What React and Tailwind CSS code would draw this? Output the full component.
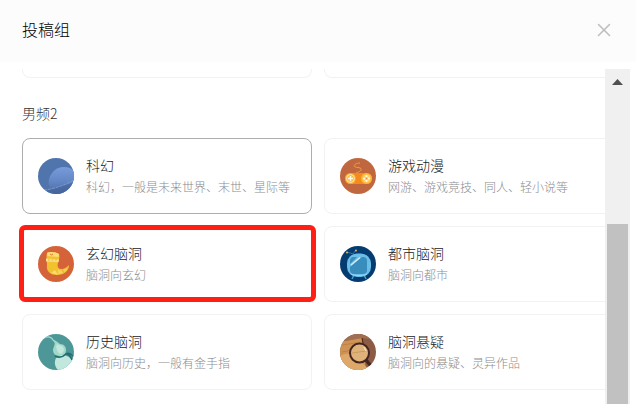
import React, { useState } from "react";
import { X } from "lucide-react";

const PlanetIcon = () => (
  <svg viewBox="0 0 36 36" className="w-9 h-9 shrink-0 rounded-full" aria-hidden="true">
    <defs>
      <linearGradient id="planet" x1="0" y1="0" x2="0" y2="1">
        <stop offset="0" stopColor="#789cdb" />
        <stop offset="0.5" stopColor="#6488c6" />
        <stop offset="1" stopColor="#4a6aa4" />
      </linearGradient>
    </defs>
    <rect width="36" height="36" fill="#5074ac" />
    <path d="M11 27C9 19 16 9 26 9C32 9 37 12 38 17V27L28 36H16Z" fill="url(#planet)" />
    <path d="M9 33L37 24V36H9Z" fill="#42609a" opacity="0.6" />
    <path d="M6 32C16 31 27 27 36 22" fill="none" stroke="#8ba4cf" strokeWidth="0.7" strokeDasharray="3 1" />
  </svg>
);

const GamepadIcon = () => (
  <svg viewBox="0 0 36 36" className="w-9 h-9 shrink-0 rounded-full" aria-hidden="true">
    <rect width="36" height="36" fill="#c1673f" />
    <path d="M20 5C16 5 14 7 14 8C15 10 21 9 21 11C22 13 18 14 16 15" fill="none" stroke="#eda044" strokeWidth="1" />
    <rect x="5" y="15" width="27" height="11" rx="5.5" fill="#f48b1c" />
    <circle cx="10.5" cy="20.5" r="5.5" fill="#fba930" />
    <circle cx="26.5" cy="20.5" r="5.5" fill="#fdb43b" />
    <circle cx="10.5" cy="20.5" r="4" fill="#ffb93f" stroke="#fff0c0" strokeWidth="0.9" />
    <path d="M10.5 18V23M8 20.5H13" stroke="#fffbe5" strokeWidth="1.4" />
    <circle cx="26.5" cy="20.5" r="4" fill="#ffd25e" />
    <g fill="#fffbe5">
      <circle cx="26.5" cy="18.2" r="1.1" />
      <circle cx="26.5" cy="22.8" r="1.1" />
      <circle cx="24.2" cy="20.5" r="1.1" />
      <circle cx="28.8" cy="20.5" r="1.1" />
    </g>
    <circle cx="26.5" cy="20.5" r="0.8" fill="#e98422" />
  </svg>
);

const HornIcon = () => (
  <svg viewBox="0 0 36 36" className="w-9 h-9 shrink-0 rounded-full" aria-hidden="true">
    <rect width="36" height="36" fill="#d5633a" />
    <path d="M9 7C12 5 18 6 21 8C22 10 21 14 20 17C19 20 20 23 23 23C27 23 29 21 31 19C31 25 26 29 19 29C12 29 8 25 9 19C9 14 8 11 9 7Z" fill="#f2c12f" />
    <path d="M9 7C12 5 18 6 21 8L20.5 11L9.500 10Z" fill="#fbdc77" />
    <path d="M8 12.500L21 13.500L20.500 16L8 15.500Z" fill="#fbe08a" />
    <path d="M13 27L17 24L20 29Z" fill="#f9da6b" />
    <path d="M20 23C21 25 25 25 29 22C27 27 23 28 20 28Z" fill="#f7d35b" />
    <path d="M24 23.500L26 27" fill="none" stroke="#eeb32a" strokeWidth="1.4" />
    <path d="M12 8L13.500 9L15 8" stroke="#dc7535" strokeWidth="1" fill="none" />
    <path d="M10 14H19" stroke="#e9a83c" strokeWidth="0.8" strokeDasharray="2 1.500" />
  </svg>
);

const TvIcon = () => (
  <svg viewBox="0 0 36 36" className="w-9 h-9 shrink-0 rounded-full" aria-hidden="true">
    <rect width="36" height="36" fill="#043b70" />
    <path d="M13 8L7 6M13 8L16 4" stroke="#3c769c" strokeWidth="0.9" />
    <circle cx="7" cy="6.500" r="0.9" fill="#e9c36e" />
    <circle cx="16" cy="4.500" r="0.9" fill="#e9c36e" />
    <path d="M14 29L12 33M24 29L26 33" stroke="#4a9ecb" strokeWidth="1.5" />
    <rect x="7" y="7.500" width="24" height="23.500" rx="10" fill="#69bee8" />
    <rect x="10" y="11" width="17" height="17" rx="4" fill="#398dbd" />
    <path d="M10 18L17 11H22L10 21Z" fill="#6db9e0" />
    <path d="M11 19L20 11.500" stroke="#d3effb" strokeWidth="1.2" />
    <path d="M11 28C15 30 23 30 27 28" fill="none" stroke="#a3e0f5" strokeWidth="0.8" />
  </svg>
);

const GourdIcon = () => (
  <svg viewBox="0 0 36 36" className="w-9 h-9 shrink-0 rounded-full" aria-hidden="true">
    <rect width="36" height="36" fill="#4e9799" />
    <path d="M6 4C10 2 14 3 15 6L18 9" fill="none" stroke="#a6dbce" strokeWidth="1.2" />
    <path d="M16 6C19 7 20 9 22 10C26 10 28 13 28 16C28 20 25 22 22 22C17 22 15 19 15 16C15 13 18 11 16 6Z" fill="#a2d8c8" />
    <path d="M19 10C20 11 22 11 24 12C27 14 26 19 23 20C19 19 19 15 18 13Z" fill="#c0e8dc" />
    <path d="M19 23C23 20 31 21 34 26V36H20C16 32 16 26 19 23Z" fill="#c2e8de" />
    <path d="M17 22C21 24 25 23 28 20C31 18 33 20 35 22M29 20C32 21 33 23 34 26" fill="none" stroke="#246d72" strokeWidth="1.6" />
  </svg>
);

const MagnifierIcon = () => (
  <svg viewBox="0 0 36 36" className="w-9 h-9 shrink-0 rounded-full" aria-hidden="true">
    <rect width="36" height="36" fill="#8c5b43" />
    <path d="M0 0H36V6L22 4L0 8Z" fill="#a06f52" />
    <path d="M0 8L22 4L26 36H0Z" fill="#cf9455" />
    <path d="M0 22C7 19 11 19 15 23L30 36H0Z" fill="#dea869" />
    <path d="M2 11L22 8M2 18L12 16" stroke="#b57c46" strokeWidth="0.8" />
    <path d="M22 4L23 9" stroke="#4f2a22" strokeWidth="1.2" />
    <circle cx="19.500" cy="19" r="9.500" fill="#dfb27a" stroke="#432622" strokeWidth="2" />
    <path d="M12 19L26 17" stroke="#c99a62" strokeWidth="1" />
    <path d="M24 13L26 17" stroke="#f4dfc4" strokeWidth="1.2" />
    <path d="M26 26L31 32" stroke="#432622" strokeWidth="3.500" />
  </svg>
);

const groups = [
  { name: "科幻", desc: "科幻，一般是未来世界、末世、星际等", Icon: PlanetIcon },
  { name: "游戏动漫", desc: "网游、游戏竞技、同人、轻小说等", Icon: GamepadIcon },
  { name: "玄幻脑洞", desc: "脑洞向玄幻", Icon: HornIcon, marked: true },
  { name: "都市脑洞", desc: "脑洞向都市", Icon: TvIcon },
  { name: "历史脑洞", desc: "脑洞向历史，一般有金手指", Icon: GourdIcon },
  { name: "脑洞悬疑", desc: "脑洞向的悬疑、灵异作品", Icon: MagnifierIcon },
];

const GroupCard = ({ group, selected, onSelect }) => {
  const { name, desc, Icon, marked } = group;

  return (
    <button
      type="button"
      aria-pressed={selected}
      onClick={onSelect}
      className={`relative flex h-19 items-center gap-3 rounded-lg border px-[15px] text-left ${
        selected ? "border-[#adadad]" : "border-[#f2f2f2]"
      }`}
    >
      <Icon />
      <span className="flex flex-col gap-0.5 whitespace-nowrap">
        <span className="text-sm leading-5 text-[#222]">{name}</span>
        <span className="text-xs leading-5 text-[#8c8c8c]">{desc}</span>
      </span>
      {/* Red highlight over the card */}
      {marked && (
        <span className="pointer-events-none absolute -top-[2px] -bottom-px -left-1 -right-[5px] rounded-md border-5 border-[#ff1f14]" />
      )}
    </button>
  );
};

const App = () => {
  const [selected, setSelected] = useState("科幻");

  return (
    <div className="flex h-screen flex-col overflow-hidden bg-white font-['Noto_Sans_CJK_SC',sans-serif] font-light">
      {/* Header */}
      <header className="flex h-[62px] shrink-0 items-center justify-between bg-[#fcfcfc] pb-1 pl-[22px] pr-[21px]">
        <h1 className="text-base leading-6 text-black">投稿组</h1>
        <button type="button" aria-label="关闭" className="pt-0.5 text-[#bfbfbf]">
          <X size={22} strokeWidth={1.75} />
        </button>
      </header>

      <div className="mt-[7px] flex min-h-0 flex-1 pr-1.5">
        {/* List */}
        <main className="min-w-0 flex-1 overflow-hidden pl-[22px]">
          <div className="grid grid-cols-[repeat(2,minmax(290px,1fr))] gap-3">
            <div className="h-[9px] rounded-b-lg border border-t-0 border-[#f2f2f2]" />
            <div className="h-[9px] rounded-b-lg border border-t-0 border-[#f2f2f2]" />
          </div>
          <h2 className="mt-[25px] mb-[15px] text-sm leading-5 text-[#333]">男频2</h2>
          <div className="grid grid-cols-[repeat(2,minmax(290px,1fr))] gap-3">
            {groups.map((group) => (
              <GroupCard
                key={group.name}
                group={group}
                selected={selected === group.name}
                onSelect={() => setSelected(group.name)}
              />
            ))}
          </div>
        </main>

        {/* Scrollbar */}
        <div className="flex w-[25px] shrink-0 flex-col bg-[#f0f0f0] px-0.5">
          <button type="button" aria-label="向上滚动" className="flex h-[26px] items-center justify-center">
            <svg width="11" height="6" viewBox="0 0 11 6" fill="#505050">
              <path d="M5.500 0L11 6H0Z" />
            </svg>
          </button>
          <div className="mt-[129px] flex-1 bg-[#c1c1c1]" />
        </div>
      </div>
    </div>
  );
};

export default App;
